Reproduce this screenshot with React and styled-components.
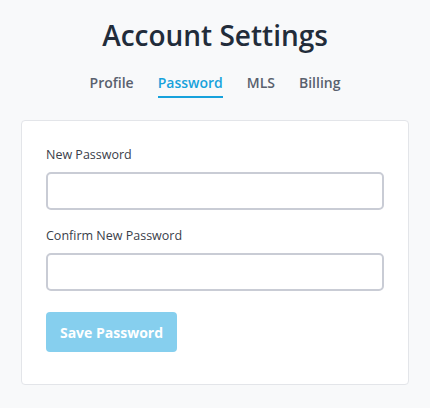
import React from "react";
import styled, { createGlobalStyle } from "styled-components";

const GlobalStyle = createGlobalStyle`
  html, body {
    margin: 0;
    padding: 0;
    background: #f8f9fa;
    font-family: "Open Sans", "Noto Sans", sans-serif;
  }
  * {
    box-sizing: border-box;
  }
`;

const Page = styled.div`
  padding: 17px 21px 24px;
`;

const Title = styled.h1`
  margin: 0;
  font-size: 28px;
  font-weight: 600;
  line-height: 36px;
  text-align: center;
  color: #222c3a;
`;

const Tabs = styled.nav`
  display: flex;
  justify-content: center;
  gap: 24px;
  margin-top: 20px;
`;

const Tab = styled.a`
  padding-bottom: 3px;
  font-size: 14px;
  font-weight: 600;
  line-height: 20px;
  color: ${(p) => (p.$active ? "#17a2dc" : "#59616e")};
  border-bottom: 2px solid ${(p) => (p.$active ? "#17a2dc" : "transparent")};
  cursor: pointer;
`;

const Card = styled.form`
  margin-top: 22px;
  padding: 24px 24px 32px;
  background: #fff;
  border: 1px solid #e3e5e9;
  border-radius: 4px;
`;

const Field = styled.div`
  display: flex;
  flex-direction: column;
  gap: 8px;
  margin-bottom: 16px;
`;

const Label = styled.label`
  font-size: 12.5px;
  line-height: 19px;
  color: #3a404a;
`;

const Input = styled.input`
  height: 38px;
  padding: 0 10px;
  border: 2px solid #c9ccd5;
  border-radius: 5px;
  background: #fff;
  font-family: inherit;
  font-size: 14px;
  outline: none;
`;

const Button = styled.button`
  margin-top: 5px;
  width: 131px;
  height: 40px;
  border: none;
  border-radius: 4px;
  background: #86cfee;
  color: #fff;
  font-family: inherit;
  font-size: 14px;
  font-weight: 700;
  cursor: not-allowed;
`;

const tabs = ["Profile", "Password", "MLS", "Billing"];

export default function App() {
  return (
    <Page>
      <GlobalStyle />
      <Title>Account Settings</Title>
      <Tabs>
        {tabs.map((t) => (
          <Tab key={t} $active={t === "Password"}>
            {t}
          </Tab>
        ))}
      </Tabs>
      <Card onSubmit={(e) => e.preventDefault()}>
        <Field>
          <Label>New Password</Label>
          <Input type="password" />
        </Field>
        <Field>
          <Label>Confirm New Password</Label>
          <Input type="password" />
        </Field>
        <Button type="submit" disabled>
          Save Password
        </Button>
      </Card>
    </Page>
  );
}
